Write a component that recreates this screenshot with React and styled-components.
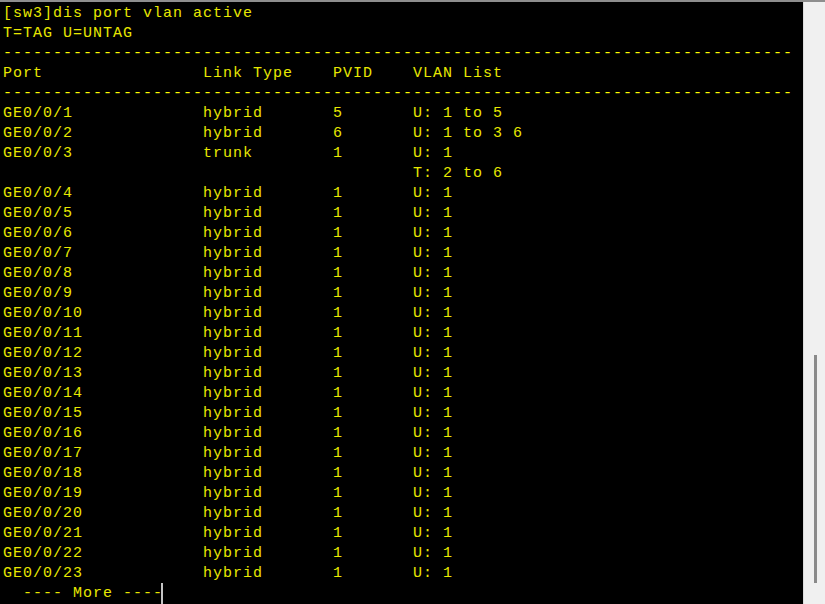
import React from 'react'
import styled, { createGlobalStyle } from 'styled-components'

const Global = createGlobalStyle`
  html, body { margin: 0; padding: 0; background: #000; }
  body { width: 825px; height: 604px; overflow: hidden; }
`

const Window = styled.div`
  display: flex;
  width: 825px;
  height: 604px;
  box-sizing: border-box;
  border-top: 2px solid #8e8e8e;
  background: #000;
`

const Screen = styled.div`
  flex: 0 0 803px;
  padding: 2px 0 0 3px;
  box-sizing: border-box;
  overflow: hidden;
  font-family: "Liberation Mono", "DejaVu Sans Mono", monospace;
  font-size: 15px;
  letter-spacing: 1px;
  color: #e8e800;
`

const Line = styled.div`
  height: 20px;
  line-height: 20px;
  white-space: pre;
`

const Rule = styled(Line)`
  color: #ffff00;
`

const Row = styled.div`
  display: grid;
  grid-template-columns: 200px 130px 80px 1fr;
  height: 20px;
  line-height: 20px;
  white-space: pre;
`

const Cursor = styled.span`
  display: inline-block;
  width: 2px;
  height: 21px;
  margin-left: -2px;
  vertical-align: top;
  margin-top: -1px;
  background: #c4c4c4;
`

const Track = styled.div`
  flex: 1;
  display: flex;
  flex-direction: column;
  border-left: 1px solid #dcdcdc;
  background: #f0f0f0;
`

const Thumb = styled.div`
  width: 3px;
  height: 228px;
  margin: 353px 0 0 10px;
  background: #8a8a8a;
`

const ports = [
  ['GE0/0/1', 'hybrid', '5', 'U: 1 to 5'],
  ['GE0/0/2', 'hybrid', '6', 'U: 1 to 3 6'],
  ['GE0/0/3', 'trunk', '1', 'U: 1'],
  ['', '', '', 'T: 2 to 6'],
]
for (let i = 4; i <= 23; i++) ports.push(['GE0/0/' + i, 'hybrid', '1', 'U: 1'])

const dashes = '-'.repeat(79)

export default function App() {
  return (
    <>
      <Global />
      <Window>
        <Screen>
          <Line>[sw3]dis port vlan active</Line>
          <Line>T=TAG U=UNTAG</Line>
          <Rule>{dashes}</Rule>
          <Row>
            <span>Port</span>
            <span>Link Type</span>
            <span>PVID</span>
            <span>VLAN List</span>
          </Row>
          <Rule>{dashes}</Rule>
          {ports.map((p, i) => (
            <Row key={i}>
              {p.map((c, j) => <span key={j}>{c}</span>)}
            </Row>
          ))}
          <Line>{'  ---- More ----'}<Cursor /></Line>
        </Screen>
        <Track>
          <Thumb />
        </Track>
      </Window>
    </>
  )
}
